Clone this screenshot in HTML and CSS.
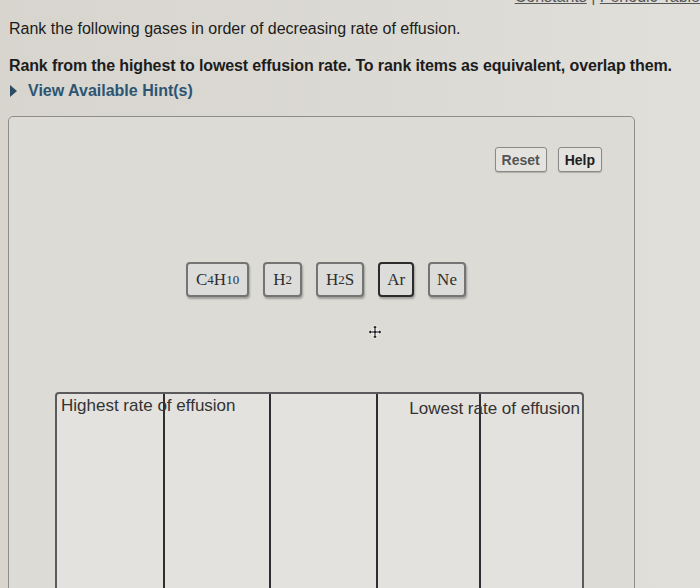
FILE: index.html
```html
<!DOCTYPE html>
<html>
<head>
<meta charset="utf-8">
<link rel="stylesheet" href="styles.css">
</head>
<body>
<div class="toplinks"><a>Constants</a> | <a>Periodic Table</a></div>
<p class="q1">Rank the following gases in order of decreasing rate of effusion.</p>
<p class="q2">Rank from the highest to lowest effusion rate. To rank items as equivalent, overlap them.</p>
<div class="hint"><span class="tri"></span>View Available Hint(s)</div>
<div class="panel">
  <div class="controls">
    <button class="btn reset">Reset</button>
    <button class="btn help">Help</button>
  </div>
  <div class="items">
    <div class="item">C<sub>4</sub>H<sub>10</sub></div>
    <div class="item">H<sub>2</sub></div>
    <div class="item">H<sub>2</sub>S</div>
    <div class="item narrow active">Ar</div>
    <div class="item narrow">Ne</div>
  </div>
  <div class="cursor">
    <svg width="16" height="16" viewBox="0 0 16 16"><path d="M8 1 L10.5 4 H9 V7 H12 V5.5 L15 8 L12 10.5 V9 H9 V12 H10.5 L8 15 L5.5 12 H7 V9 H4 V10.5 L1 8 L4 5.5 V7 H7 V4 H5.5 Z" fill="#222" stroke="#fff" stroke-width="0.8"/></svg>
  </div>
  <div class="ranking">
    <div class="col"></div>
    <div class="col"></div>
    <div class="col"></div>
    <div class="col"></div>
    <div class="col"></div>
    <span class="label high">Highest rate of effusion</span>
    <span class="label low">Lowest rate of effusion</span>
  </div>
</div>
</body>
</html>
```
FILE: styles.css
```css
html, body {
  margin: 0;
  height: 100%;
  overflow: hidden;
}
body {
  background: linear-gradient(90deg, #d7d5ce 0%, #dcdad4 60%, #e0dfda 100%);
  font-family: "Liberation Sans", Arial, sans-serif;
  color: #1c1c1c;
}
.toplinks {
  text-align: right;
  font-size: 16px;
  color: #555;
  margin-top: -12px;
  height: 22px;
  white-space: nowrap;
}
.toplinks a {
  text-decoration: underline;
  color: #555;
}
.q1 {
  margin: 0;
  padding: 9px 0 0 9px;
  font-size: 16px;
  line-height: 20px;
}
.q2 {
  margin: 0;
  padding: 17px 0 0 9px;
  font-size: 16px;
  line-height: 20px;
  font-weight: bold;
  letter-spacing: -0.12px;
}
.hint {
  display: flex;
  align-items: center;
  margin: 5px 0 0 10px;
  font-size: 16px;
  line-height: 20px;
  font-weight: bold;
  color: #2b5573;
}
.tri {
  width: 0;
  height: 0;
  border-top: 6px solid transparent;
  border-bottom: 6px solid transparent;
  border-left: 7px solid #2b4a63;
  margin-right: 11px;
}
.panel {
  margin: 15px 0 0 8px;
  width: 627px;
  height: 500px;
  border: 1.5px solid #8d8d8a;
  border-radius: 5px;
  background: #dddbd5;
  box-sizing: border-box;
}
.controls {
  display: flex;
  justify-content: flex-end;
  gap: 11px;
  padding: 30px 32px 0 0;
}
.btn {
  font-family: "Liberation Sans", Arial, sans-serif;
  font-weight: bold;
  font-size: 14px;
  height: 25px;
  padding: 0 6px;
  background: #e4e3df;
  border: 1.5px solid #8a8a88;
  border-radius: 3px;
  box-shadow: 0 1px 1px rgba(0,0,0,0.2);
}
.reset { color: #555; }
.help { color: #1e1e1e; }
.items {
  display: flex;
  gap: 14px;
  margin: 90px 0 0 177px;
}
.item {
  font-family: "Liberation Serif", "Times New Roman", serif;
  font-size: 17px;
  color: #2e2e2e;
  height: 35px;
  padding: 0 8px;
  display: flex;
  align-items: center;
  background: #dcdcdb;
  border: 2px solid #747474;
  border-radius: 4px;
  box-shadow: 1px 2px 2px rgba(0,0,0,0.28);
  box-sizing: border-box;
}
.item sub {
  font-size: 13px;
  vertical-align: -3px;
  line-height: 0;
}
.item.narrow { padding: 0 7px; }
.item.active {
  border-color: #2b2b2b;
}
.cursor {
  margin: 27px 0 0 358px;
  height: 16px;
}
.cursor svg { display: block; }
.ranking {
  position: relative;
  margin: 52px 0 0 46px;
  width: 529px;
  height: 220px;
  display: grid;
  grid-template-columns: 108px 106px 107px 103px 1fr;
  border: 2px solid #5b5b5e;
  border-bottom: none;
  border-radius: 4px 4px 0 0;
  background: #e3e2de;
  box-sizing: border-box;
}
.col {
  border-right: 2px solid #2f2f33;
}
.col:last-of-type { border-right: none; }
.label {
  position: absolute;
  top: 2px;
  font-size: 17px;
  color: #333;
  white-space: nowrap;
}
.label.high { left: 4px; }
.label.low { right: 2px; top: 5px; }
```
